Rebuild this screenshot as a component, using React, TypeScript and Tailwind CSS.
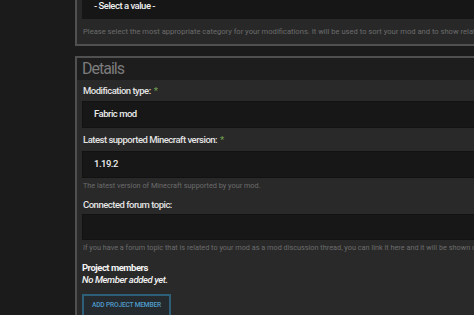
import React from "react";

// Small label with an optional green "required" star
function FieldLabel({ text, required }: { text: string; required?: boolean }) {
  return (
    <div className="text-[9.5px] font-medium tracking-[-0.5px] text-[#e4e4e4] leading-none">
      {text}
      {required && <span className="ml-[3px] text-[#6f9a4c]">*</span>}
    </div>
  );
}

function FieldBox({ value, h }: { value?: string; h: string }) {
  return (
    <div className={`${h} bg-[#171717] border border-[#121212] flex items-center pl-[11px] text-[9.5px] font-medium tracking-[-0.5px] text-[#ececec]`}>
      {value}
    </div>
  );
}

function Help({ children }: { children: React.ReactNode }) {
  return (
    <div className="h-[17px] flex items-center whitespace-nowrap text-[7.3px] text-[#6c6c6c] pl-[1px]">
      {children}
    </div>
  );
}

export default function App() {
  return (
    <div
      className="w-[474px] h-[315px] overflow-hidden bg-[#1b1b1b] pl-[75px]"
      style={{ fontFamily: "Roboto, 'Liberation Sans', sans-serif" }}
    >
      {/* ===== previous panel (category) ===== */}
      <div className="w-[420px] -mt-[9px] border-2 border-[#505050] border-r-0 bg-[#282828] pl-[5px]">
        <div className="h-[26px] bg-[#161616] flex items-center pl-[12px] text-[9.5px] font-medium tracking-[-0.5px] text-[#f0f0f0]">
          - Select a value -
        </div>
        <div className="h-[25px] flex items-center whitespace-nowrap text-[7.6px] text-[#6c6c6c] pl-[1px]">
          Please select the most appropriate category for your modifications. It will be used to sort your mod and to show related mods
        </div>
      </div>

      {/* ===== details panel ===== */}
      <div className="mt-[10px] w-[420px] border-2 border-[#505050] border-r-0 border-b-0 bg-[#292929]">
        <div className="h-[22px] bg-[#1d1d1d] flex items-center pl-[5px] text-[16px] tracking-[-1px] text-[#7c7c7c] leading-none">
          Details
        </div>
        <div className="pl-[5px]">
          <div className="h-[21px] flex items-center pl-[1px]">
            <FieldLabel text="Modification type:" required />
          </div>
          <FieldBox value="Fabric mod" h="h-[27px]" />

          <div className="h-[23px] flex items-center pl-[1px]">
            <FieldLabel text="Latest supported Minecraft version:" required />
          </div>
          <FieldBox value="1.19.2" h="h-[27px]" />
          <Help>The latest version of Minecraft supported by your mod.</Help>

          <div className="h-[19px] flex items-center pl-[1px]">
            <FieldLabel text="Connected forum topic:" />
          </div>
          <FieldBox h="h-[26px]" />
          <Help>
            If you have a forum topic that is related to your mod as a mod discussion thread, you can link it here and it will be shown on the mod page
          </Help>

          <div className="pt-[5px] text-[9.5px] font-bold tracking-[-0.5px] text-[#f2f2f2] leading-[12px]">Project members</div>
          <div className="text-[9.5px] italic font-medium tracking-[-0.4px] text-[#f2f2f2] leading-[12px]">No Member added yet.</div>

          <button className="mt-[8px] w-[89px] h-[24px] border-2 border-[#2d5f78] bg-[#252a2e] text-[6.6px] font-medium text-[#4f9cc9] tracking-tight">
            ADD PROJECT MEMBER
          </button>
        </div>
      </div>
    </div>
  );
}
